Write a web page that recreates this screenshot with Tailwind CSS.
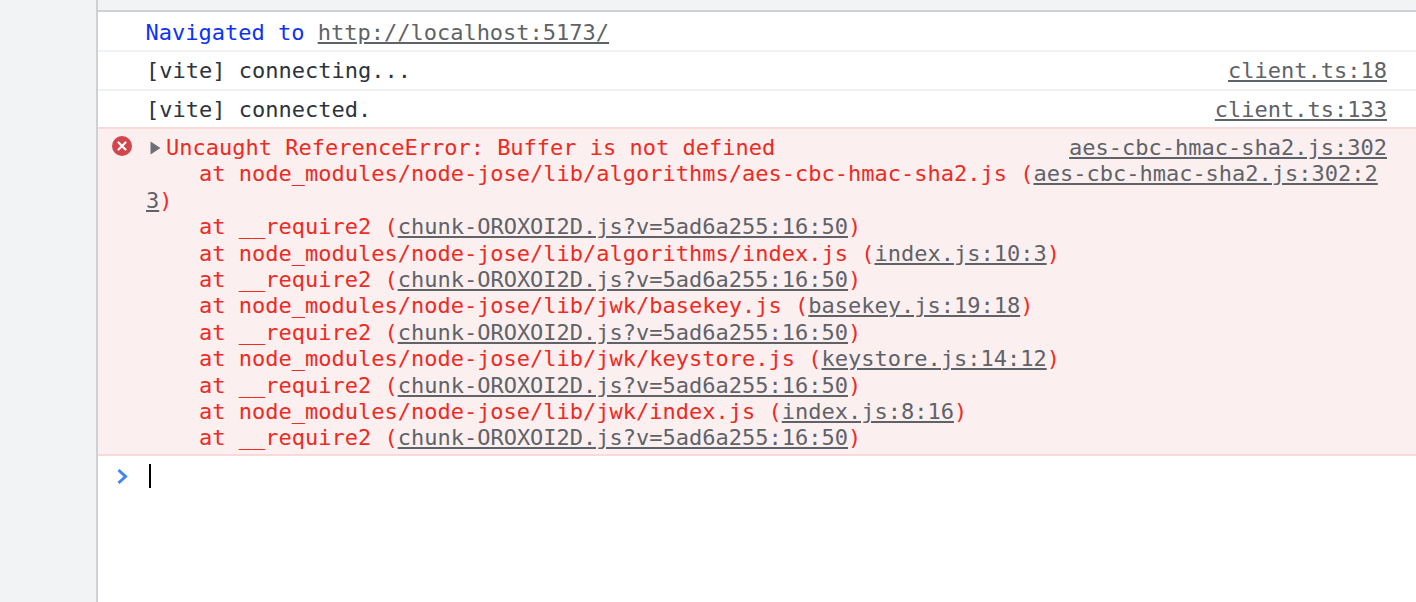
<!DOCTYPE html>
<html lang="en">
<head>
    <meta charset="UTF-8">
    <title>Console</title>
    <script src="https://cdn.jsdelivr.net/npm/@tailwindcss/browser@4"></script>
</head>
<body class="bg-white overflow-hidden">
<div class="flex h-[602px] w-[1416px] font-['DejaVu_Sans_Mono',monospace] text-[22px] leading-[26.4px]">
    <!-- Sidebar -->
    <div class="w-[98px] shrink-0 bg-[#f1f3f5] border-r-2 border-[#cdd0d4]"></div>

    <!-- Console -->
    <div class="flex-1 min-w-0 flex flex-col">
        <div class="h-3 shrink-0 bg-[#f1f3f5] border-b-2 border-[#cdd0d4]"></div>

        <div class="h-10 pl-[47.500px] pr-[29px] pt-[8px] border-b-2 border-[#f0f1f2] text-[#0b32f5]">Navigated to <a class="text-[#5f6368] underline">http://localhost:5173/</a></div>

        <div class="h-[39px] pl-[48px] pr-[29px] pt-[6px] flex justify-between border-b-2 border-[#f0f1f2] text-[#2d333b]">
            <span>[vite] connecting...</span>
            <a class="text-[#5f6368] underline">client.ts:18</a>
        </div>

        <div class="h-[36px] pl-[48px] pr-[29px] pt-[6px] flex justify-between text-[#2d333b]">
            <span>[vite] connected.</span>
            <a class="text-[#5f6368] underline">client.ts:133</a>
        </div>

        <!-- Error message -->
        <div class="relative h-[329px] bg-[#fbeff0] border-y-2 border-[#f9d9d9] pl-[48px] pr-[29px] pt-[6px] text-[#ef2a1f]">
            <svg class="absolute left-[14px] top-[7px] w-5 h-5" viewBox="0 0 20 20">
                <circle cx="10" cy="10" r="10" fill="#d2454b"/>
                <path d="M6.5 6.500l7 7M13.500 6.500l-7 7" stroke="#fff" stroke-width="2.200" stroke-linecap="round"/>
            </svg>
            <div class="flex justify-between">
                <div class="flex items-center">
                    <svg class="w-[11px] h-[14px] mr-[5px] ml-[4px]" viewBox="0 0 11 14"><path d="M0.500 0.500L10.500 7L0.500 13.500z" fill="#6e7073"/></svg>
                    <span>Uncaught ReferenceError: Buffer is not defined</span>
                </div>
                <a class="text-[#5f6368] underline">aes-cbc-hmac-sha2.js:302</a>
            </div>
            <div class="whitespace-pre">    at node_modules/node-jose/lib/algorithms/aes-cbc-hmac-sha2.js (<a class="text-[#5f6368] underline">aes-cbc-hmac-sha2.js:302:2</a></div>
            <div class="whitespace-pre"><a class="text-[#5f6368] underline">3</a>)</div>
            <div class="whitespace-pre">    at __require2 (<a class="text-[#5f6368] underline">chunk-OROXOI2D.js?v=5ad6a255:16:50</a>)</div>
            <div class="whitespace-pre">    at node_modules/node-jose/lib/algorithms/index.js (<a class="text-[#5f6368] underline">index.js:10:3</a>)</div>
            <div class="whitespace-pre">    at __require2 (<a class="text-[#5f6368] underline">chunk-OROXOI2D.js?v=5ad6a255:16:50</a>)</div>
            <div class="whitespace-pre">    at node_modules/node-jose/lib/jwk/basekey.js (<a class="text-[#5f6368] underline">basekey.js:19:18</a>)</div>
            <div class="whitespace-pre">    at __require2 (<a class="text-[#5f6368] underline">chunk-OROXOI2D.js?v=5ad6a255:16:50</a>)</div>
            <div class="whitespace-pre">    at node_modules/node-jose/lib/jwk/keystore.js (<a class="text-[#5f6368] underline">keystore.js:14:12</a>)</div>
            <div class="whitespace-pre">    at __require2 (<a class="text-[#5f6368] underline">chunk-OROXOI2D.js?v=5ad6a255:16:50</a>)</div>
            <div class="whitespace-pre">    at node_modules/node-jose/lib/jwk/index.js (<a class="text-[#5f6368] underline">index.js:8:16</a>)</div>
            <div class="whitespace-pre">    at __require2 (<a class="text-[#5f6368] underline">chunk-OROXOI2D.js?v=5ad6a255:16:50</a>)</div>
        </div>

        <!-- Prompt -->
        <div class="flex items-center pl-[19px] pt-[8px]">
            <svg class="w-[11px] h-[17px]" viewBox="0 0 11 17"><path d="M1.500 2L8.500 8.500L1.500 15" fill="none" stroke="#4285f0" stroke-width="3"/></svg>
            <div class="ml-[21px] w-[2px] h-6 bg-black"></div>
        </div>
    </div>
</div>
</body>
</html>
